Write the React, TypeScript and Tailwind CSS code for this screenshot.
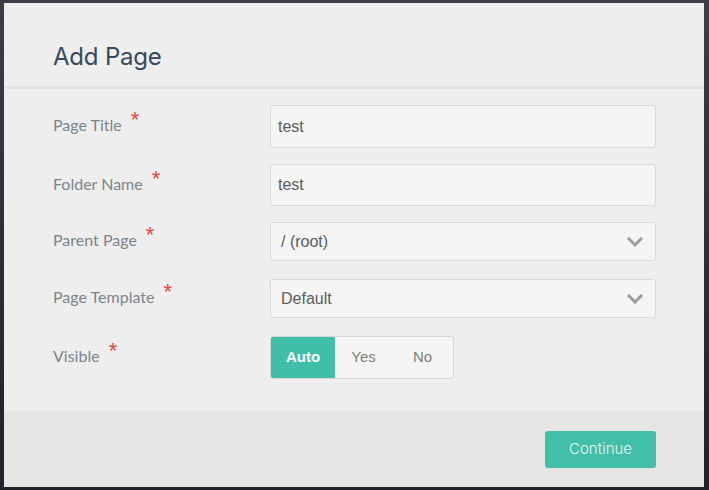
import React from 'react';

const Label = ({ text }: { text: string }) => (
  <div className="flex items-start w-[217px] -mt-[3px] text-[16px] text-[#7d8489] font-['Lato',sans-serif]">
    <span>{text}</span>
    <span className="ml-[9px] -mt-[4px] text-[22px] leading-[22px] text-[#e2463d] font-['Liberation_Sans',sans-serif]">*</span>
  </div>
);

const Chevron = () => (
  <svg width="16" height="10" viewBox="0 0 16 10" className="absolute right-[12px] top-1/2 -translate-y-1/2">
    <path d="M2 2 L8 8 L14 2" fill="none" stroke="#9b9b9b" strokeWidth="3" strokeLinecap="square" />
  </svg>
);

const App = () => {
  return (
    <div className="w-[709px] h-[490px] pt-[3px] pl-[4px] bg-gradient-to-b from-[#3b3e48] to-[#1e222a]">
      <div className="flex flex-col w-[700px] h-[484px] bg-[#eeeeee]">
        {/* header */}
        <div className="flex items-center h-[86px] pl-[49px] pt-[25px] border-b-[3px] border-[#e3e3e3] text-[24px] text-[#33495c] font-['Inter',sans-serif] tracking-[-0.2px]">
          Add Page
        </div>
        {/* form */}
        <div className="flex flex-col flex-1 pl-[49px] pr-[48px] pt-[16px] font-['Liberation_Sans',sans-serif]">
          <div className="flex items-center h-[43px]">
            <Label text="Page Title" />
            <div className="flex items-center flex-1 h-full pl-[7px] bg-[#f5f5f5] border border-[#d8d8d8] rounded-[3px] text-[16px] text-[#5c5c5c]">test</div>
          </div>
          <div className="flex items-center h-[42px] mt-[16px]">
            <Label text="Folder Name" />
            <div className="flex items-center flex-1 h-full pl-[7px] bg-[#f5f5f5] border border-[#d8d8d8] rounded-[3px] text-[16px] text-[#5c5c5c]">test</div>
          </div>
          <div className="flex items-center h-[39px] mt-[16px]">
            <Label text="Parent Page" />
            <div className="relative flex items-center flex-1 h-full pl-[10px] bg-[#f5f5f5] border border-[#d8d8d8] rounded-[3px] text-[16px] text-[#5c5c5c]">
              / (root)
              <Chevron />
            </div>
          </div>
          <div className="flex items-center h-[39px] mt-[18px]">
            <Label text="Page Template" />
            <div className="relative flex items-center flex-1 h-full pl-[10px] bg-[#f5f5f5] border border-[#d8d8d8] rounded-[3px] text-[16px] text-[#5c5c5c]">
              Default
              <Chevron />
            </div>
          </div>
          <div className="flex items-center h-[43px] mt-[18px]">
            <Label text="Visible" />
            <div className="flex h-full w-[184px] bg-[#f5f5f5] border border-[#d5d5d5] rounded-[3px] overflow-hidden text-[15px]">
              <div className="flex items-center justify-center w-[64px] bg-[#40bfa8] text-white font-bold">Auto</div>
              <div className="flex items-center justify-center w-[57px] text-[#7d7d7d]">Yes</div>
              <div className="flex items-center justify-center flex-1 text-[#7d7d7d]">No</div>
            </div>
          </div>
        </div>
        {/* footer */}
        <div className="flex items-center justify-end h-[76px] pr-[48px] bg-[#e5e5e5]">
          <div className="flex items-center justify-center w-[111px] h-[37px] rounded-[3px] bg-[#41bfa8]">
            <span className="text-[15px] text-[#e8f7f3] font-['Inter',sans-serif] font-light">Continue</span>
          </div>
        </div>
      </div>
    </div>
  );
};

export default App;
